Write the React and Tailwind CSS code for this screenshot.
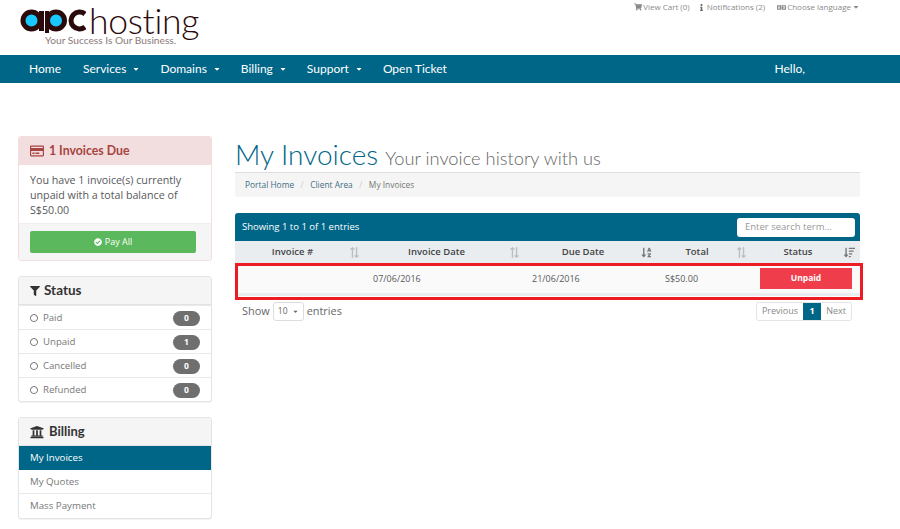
import { FaShoppingCart, FaInfo, FaLanguage, FaRegCreditCard, FaCheckCircle, FaFilter, FaUniversity, FaRegCircle, FaExchangeAlt, FaSortAlphaDown, FaSortAmountDown, FaCaretDown } from 'react-icons/fa';

const OPEN = "font-['Open_Sans',sans-serif]";
const HEAD = "font-['Lato',sans-serif]";

const NAV = [
  { label: 'Home' },
  { label: 'Services', menu: true },
  { label: 'Domains', menu: true },
  { label: 'Billing', menu: true },
  { label: 'Support', menu: true },
  { label: 'Open Ticket' },
];

const STATUS = [
  { label: 'Paid', count: 0 },
  { label: 'Unpaid', count: 1 },
  { label: 'Cancelled', count: 0 },
  { label: 'Refunded', count: 0 },
];

function Logo() {
  return (
    <div className="relative h-[55px] w-[200px] shrink-0">
      <svg width="66" height="26" viewBox="0 0 66 26" className="absolute left-[20px] top-[8px]">
        <circle cx="11.5" cy="12.5" r="8.5" fill="#19c8ff" stroke="#2a0a0a" strokeWidth="5" />
        <rect x="19" y="3" width="5" height="20" fill="#2a0a0a" />
        <circle cx="36" cy="12.5" r="8.5" fill="#19c8ff" stroke="#2a0a0a" strokeWidth="5" />
        <rect x="25" y="3" width="4" height="22" fill="#2a0a0a" />
        <path d="M65 6 A8.5 8.5 0 1 0 65 19" fill="none" stroke="#2a0a0a" strokeWidth="5" />
      </svg>
      <span className={`${HEAD} absolute left-[89px] top-[5px] text-[35.5px] leading-[32px] font-light tracking-[-0.3px] text-[#2a0a0a]`}>hosting</span>
      <span className={`${HEAD} absolute left-[45px] top-[34px] text-[10.2px] leading-[12px] text-[#8a7a78]`}>Your Success Is Our Business.</span>
    </div>
  );
}

function SortIcon({ className, children }) {
  return <span className={`absolute top-[6px] text-[11px] text-[#b9bfc4] ${className}`}>{children}</span>;
}

function SidePanel({ icon, title, gap, size, children }) {
  return (
    <div className="rounded-[3px] border border-[#e4e4e4] bg-white shadow-[0_1px_1px_rgba(0,0,0,0.05)] overflow-hidden">
      <div className={`flex h-[28px] items-center bg-[#f5f5f5] border-b border-[#e2e2e2] pl-[11px] ${gap}`}>
        {icon}
        <span className={`${HEAD} font-bold text-[#333] ${size}`}>{title}</span>
      </div>
      {children}
    </div>
  );
}

export default function App() {
  return (
    <div className={`${OPEN} relative h-[529px] w-[900px] overflow-hidden bg-white text-[#58595b]`}>
      {/* top */}
      <div className="flex h-[55px] justify-between pr-[40px]">
        <Logo />
        <div className="flex h-[14px] items-center text-[8px] text-[#8a8a8a]">
          <FaShoppingCart size={8} className="mr-[1px]" /><span>View Cart (0)</span>
          <FaInfo size={7} className="ml-[8px] mr-[2px] text-[#666]" /><span>Notifications (2)</span>
          <FaLanguage size={9} className="ml-[12px] mr-[1px]" /><span>Choose language</span>
          <FaCaretDown size={8} className="ml-[1px]" />
        </div>
      </div>

      {/* nav */}
      <nav className={`${HEAD} flex h-[28px] items-center justify-between bg-[#006687] pl-[29px] pr-[95px] text-[12px] text-white`}>
        <div className="flex items-center gap-[20px]">
          {NAV.map(n => (
            <span key={n.label} className="flex items-center first:mr-[2px]">
              {n.label}
              {n.menu && <FaCaretDown size={8} className="ml-[6px]" />}
            </span>
          ))}
        </div>
        <span>Hello,</span>
      </nav>

      <div className="flex gap-[23px] pl-[18px] pr-[40px] pt-[53px]">
        {/* sidebar */}
        <aside className="flex w-[194px] shrink-0 flex-col gap-[15px]">
          <div className="rounded-[3px] border border-[#f2dede] bg-white overflow-hidden">
            <div className="flex h-[28px] items-center gap-[5px] bg-[#f2dede] pl-[11px] text-[#a94442]">
              <FaRegCreditCard size={14} />
              <span className={`${HEAD} text-[12.3px] font-bold`}>1 Invoices Due</span>
            </div>
            <p className="px-[11px] pb-[5px] pt-[8px] text-[10.7px] leading-[15px] text-[#58595b]">You have 1 invoice(s) currently unpaid with a total balance of S$50.00</p>
            <div className="border-t border-[#eee] bg-[#f5f5f5] pb-[7px] pl-[11px] pr-[15px] pt-[7px]">
              <div className="flex h-[22px] items-center justify-center gap-[3px] rounded-[2px] bg-[#5cb85c] text-[9px] text-white">
                <FaCheckCircle size={8} />Pay All
              </div>
            </div>
          </div>

          <SidePanel icon={<FaFilter size={10} className="text-[#333]" />} title="Status" gap="gap-[4px]" size="text-[13.5px]">
            {STATUS.map(s => (
              <div key={s.label} className="flex h-[24px] items-center justify-between border-t border-[#eaeaea] pl-[11px] pr-[11px] pt-[1px] text-[9.6px] text-[#777] first:border-t-0 first:pt-0">
                <span className="flex items-center gap-[5px]"><FaRegCircle size={8} className="text-[#555]" />{s.label}</span>
                <span className="flex h-[15px] w-[27px] items-center justify-center rounded-full bg-[#6f6f6f] text-[8.5px] font-bold text-white">{s.count}</span>
              </div>
            ))}
          </SidePanel>

          <SidePanel icon={<FaUniversity size={14} className="text-[#333]" />} title="Billing" gap="gap-[5px]" size="text-[13px]">
            <div className="flex h-[24px] items-center bg-[#006687] pl-[11px] text-[9.7px] text-white">My Invoices</div>
            <div className="flex h-[24px] items-center border-b border-[#eaeaea] pl-[11px] pt-[1px] text-[9.7px] text-[#777]">My Quotes</div>
            <div className="flex h-[24px] items-center pl-[11px] pt-[1px] text-[9.7px] text-[#777]">Mass Payment</div>
          </SidePanel>
        </aside>

        {/* main */}
        <main className="min-w-0 flex-1">
          <div className={`${HEAD} flex h-[37px] items-baseline gap-[7px] border-b border-[#ddd]`}>
            <h1 className="text-[28px] font-light leading-[36px] text-[#006687]">My Invoices</h1>
            <span className="text-[18.3px] font-light text-[#666]">Your invoice history with us</span>
          </div>
          <div className="flex h-[24px] items-center gap-[6.5px] rounded-b-[3px] bg-[#f5f5f5] pl-[10px] text-[8.4px]">
            <span className="text-[#3e6d84]">Portal Home</span>
            <span className="text-[#ccc]">/</span>
            <span className="text-[#3e6d84]">Client Area</span>
            <span className="text-[#ccc]">/</span>
            <span className="text-[#777]">My Invoices</span>
          </div>

          <div className="mt-[16px] flex h-[28px] items-center justify-between rounded-t-[3px] bg-[#006687] pl-[7px] pr-[5px] text-[9.5px] text-white">
            <span>Showing 1 to 1 of 1 entries</span>
            <div className="flex h-[19px] w-[118px] items-center rounded-[3px] bg-white pl-[8px] text-[9.5px] text-[#999]">Enter search term...</div>
          </div>

          <table className="w-full table-fixed border-collapse text-[9px]">
            <thead>
              <tr className="h-[23px] bg-[#e9edf0] text-[9.5px] text-[#444]">
                <th className="relative w-[132px] pr-[17px] font-semibold">Invoice #<SortIcon className="right-[7px]"><FaExchangeAlt className="rotate-90" /></SortIcon></th>
                <th className="relative w-[160px] pr-[21px] font-semibold">Invoice Date<SortIcon className="right-[7px]"><FaExchangeAlt className="rotate-90" /></SortIcon></th>
                <th className="relative w-[132px] pr-[20px] font-semibold">Due Date<SortIcon className="right-[7px]"><FaSortAlphaDown className="text-[#777]" /></SortIcon></th>
                <th className="relative w-[95px] pr-[19px] font-semibold">Total<SortIcon className="right-[7px]"><FaExchangeAlt className="rotate-90" /></SortIcon></th>
                <th className="relative pr-[18px] font-semibold">Status<SortIcon className="right-[5px]"><FaSortAmountDown className="text-[#777]" /></SortIcon></th>
              </tr>
            </thead>
            <tbody>
              <tr className="h-[30px] border-t-[2px] border-b-[3px] border-t-white border-b-[#e9edf0] bg-[#fafafa] text-left">
                <td></td>
                <td className="pl-[6px]">07/06/2016</td>
                <td className="pl-[5px]">21/06/2016</td>
                <td className="pl-[6px]">S$50.00</td>
                <td className="pl-[6px] pr-[8px]">
                  <div className="flex h-[21px] items-center justify-center bg-[#f03d4c] text-[8.5px] font-bold text-white">Unpaid</div>
                </td>
              </tr>
            </tbody>
          </table>

          <div className="mt-[6px] flex items-center justify-between pl-[7px] pr-[8px] text-[10.9px] text-[#666]">
            <div className="flex items-center gap-[2px]">
              Show
              <span className="mx-[1px] flex h-[19px] w-[31px] items-center justify-center gap-[4px] rounded-[3px] border border-[#ddd] text-[8.5px]">10<FaCaretDown size={7} /></span>
              entries
            </div>
            <div className="flex h-[19px] items-stretch rounded-[3px] border border-[#e4e4e4] text-[9px] text-[#888]">
              <span className="flex w-[46px] items-center justify-center">Previous</span>
              <span className="flex w-[18px] items-center justify-center bg-[#006687] font-bold text-white">1</span>
              <span className="flex w-[30px] items-center justify-center">Next</span>
            </div>
          </div>
        </main>
      </div>

      {/* red annotation box on the screenshot */}
      <div className="absolute left-[235px] top-[263px] h-[37px] w-[628px] border-[3px] border-[#ed1c24]"></div>
    </div>
  );
}
